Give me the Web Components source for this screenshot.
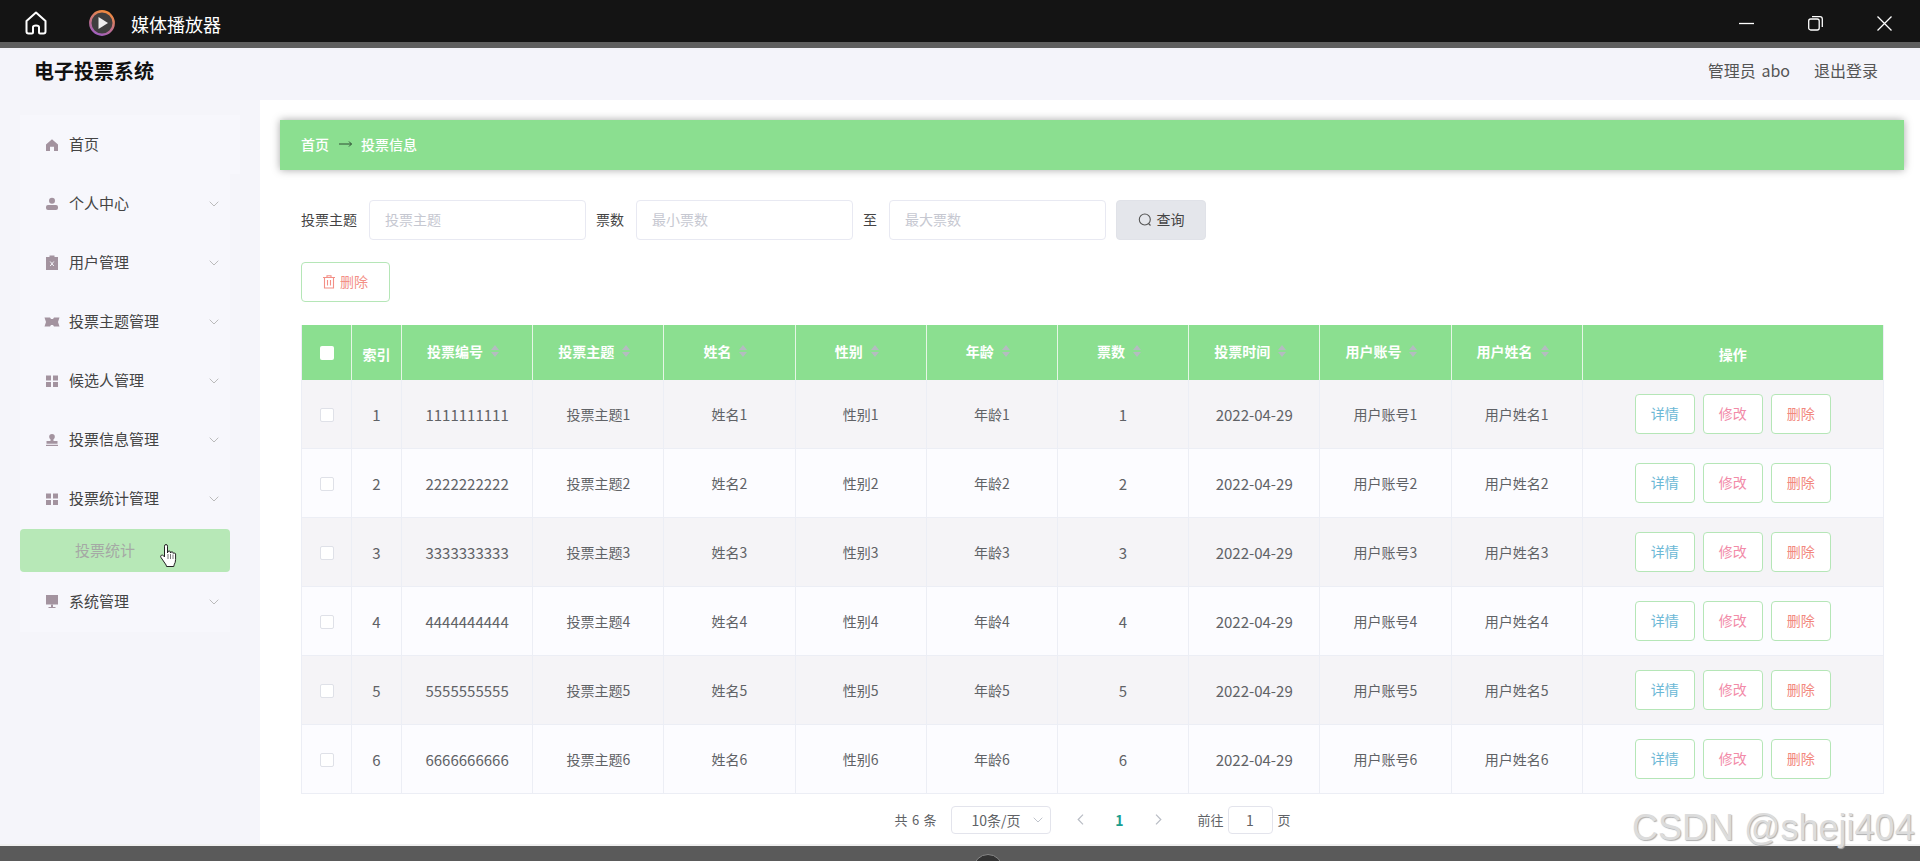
<!DOCTYPE html>
<html lang="zh">
<head>
<meta charset="utf-8">
<title>电子投票系统</title>
<style>
  html, body { margin: 0; height: 861px; overflow: hidden; background: #fff; }
  body { font-family: "Noto Sans CJK SC", "Noto Sans", sans-serif; }
</style>
</head>
<body>
<app-shell>
  <title-bar slot="title">媒体播放器</title-bar>
  <top-nav slot="nav"></top-nav>
  <side-menu slot="side"></side-menu>
  <bread-crumb>投票信息</bread-crumb>
  <search-bar></search-bar>
  <data-table></data-table>
  <page-bar></page-bar>
</app-shell>

<script>
const icons = {
    home: '<path d="M6 .2 12 5.400V12H8V7.800H4V12H0V5.400z"/>',
    user: '<circle cx="6" cy="2.800" r="3"/><rect y="7" width="12" height="5" rx="2"/>',
    clip: '<path d="M3.500-1.500h5V0H12V13H0V0h3.500z"/><path d="m4.200 4.500 3.600 4.500m0-4.500-3.600 4.500" stroke="#f7f7fc" fill="none"/>',
    ticket: '<path d="M-1.500 1.500H4l1 1.500h2l1-1.500h5.500L12 6l1.500 4.500H8L7 9H5l-1 1.500h-5.500L0 6z"/>',
    grid: '<rect y=".5" width="5" height="5"/><rect x="7" y=".5" width="5" height="5"/><rect y="7" width="5" height="5"/><rect x="7" y="7" width="5" height="5"/>',
    stamp: '<circle cx="6" cy="2.800" r="2.800"/><path d="M4.800 4.500h2.400L7.600 7H11.500v2.700H.5V7h3.900z"/><rect y="10.800" width="12" height="1.200"/>',
    screen: '<rect y="-1" width="12" height="9.500"/><rect x="5" y="8.500" width="2" height="2.500"/><rect x="2.500" y="11" width="7" height="1"/>'
};

const chevron = '<svg width="10" height="6" viewBox="0 0 10 6" fill="none" stroke="currentColor"><path d="M.7.7 5 5 9.300.7"/></svg>';

class TitleBar extends HTMLElement {
    constructor() {
        super();
        this.attachShadow({ mode: "open" });
        this.shadowRoot.innerHTML = `
        <style>
            :host { display: block; background: #141414; color: #fff; border-bottom: 6px solid #5f5f5f; }
            .bar { height: 42px; box-sizing: border-box; padding: 4px 0 0 25px; display: flex; align-items: center; font-size: 18px; }
            .app { margin-left: 42px; margin-right: 16px; display: block; }
            .name { margin-top: 1px; }
            .win { margin-left: auto; display: flex; gap: 54px; padding-right: 28px; }
            svg { display: block; }
        </style>
        <div class="bar">
            <svg width="22" height="24" viewBox="0 0 22 24" fill="none" stroke="#fff" stroke-width="2" stroke-linejoin="round"><path d="M11 1.500 1.500 10v10.500q0 2 2 2h3.500q1 0 1-1V16q0-1.500 3-1.500t3 1.500v5.500q0 1 1 1h3.500q2 0 2-2V10z"/></svg>
            <svg class="app" width="26" height="26" viewBox="0 0 26 26">
                <defs><linearGradient id="ring" x1="0.7" y1="0" x2="0.3" y2="1"><stop offset="0" stop-color="#f08a3c"/><stop offset="1" stop-color="#a05fc0"/></linearGradient></defs>
                <circle cx="13" cy="13" r="11.700" fill="#3f3f3f" stroke="url(#ring)" stroke-width="2.400"/>
                <path d="M9.500 7 19 13 9.500 19z" fill="#eee"/>
            </svg>
            <span class="name"><slot></slot></span>
            <div class="win">
                <svg width="15" height="15" viewBox="0 0 15 15" fill="none" stroke="#fff" stroke-width="1.300"><path d="M0 7.500h15"/></svg>
                <svg width="15" height="15" viewBox="0 0 15 15" fill="none" stroke="#fff" stroke-width="1.300"><rect x=".7" y="3" width="10.500" height="11" rx="2"/><path d="M4 .7h8q2.300 0 2.300 2.300v8"/></svg>
                <svg width="15" height="15" viewBox="0 0 15 15" fill="none" stroke="#fff" stroke-width="1.300"><path d="m.5.500 14 14m0-14-14 14"/></svg>
            </div>
        </div>`;
    }
}

class TopNav extends HTMLElement {
    constructor() {
        super();
        this.attachShadow({ mode: "open" });
        this.shadowRoot.innerHTML = `
        <style>
            :host { display: flex; height: 52px; align-items: center; background: #f4f4fa; padding: 0 42px 8px 34px; box-sizing: border-box; }
            b { font-size: 20px; font-weight: 700; color: #111; }
            span { font-size: 16px; color: #555; }
            .user { margin-left: auto; margin-right: 24px; word-spacing: 2px; }
        </style>
        <b>电子投票系统</b>
        <span class="user">管理员 abo</span>
        <span>退出登录</span>`;
    }
}

class MenuItem extends HTMLElement {
    constructor() {
        super();
        this.attachShadow({ mode: "open" });
        const arrow = this.hasAttribute("plain") ? "" : `<span class="arrow">${chevron}</span>`;
        this.shadowRoot.innerHTML = `
        <style>
            :host { display: flex; height: 59px; align-items: center; padding: 0 11px 0 26px; font-size: 15px; color: #444; }
            svg { display: block; }
            .ic { width: 12px; height: 12px; fill: #a3939f; margin-right: 11px; overflow: visible; }
            .txt { margin-top: -2px; }
            .arrow { margin-left: auto; color: #bbb; }
        </style>
        <svg class="ic" viewBox="0 0 12 12">${icons[this.getAttribute("icon")]}</svg>
        <span class="txt"><slot></slot></span>
        ${arrow}`;
    }
}

class SideMenu extends HTMLElement {
    constructor() {
        super();
        this.attachShadow({ mode: "open" });
        this.shadowRoot.innerHTML = `
        <style>
            :host { display: block; width: 260px; background: #f5f5fa; padding-top: 15px; box-sizing: border-box; flex: none; }
            .menu { margin-left: 20px; width: 210px; background: #f7f7fc; position: relative; padding-bottom: 1px; }
            .home { width: 220px; background: #f7f7fc; box-sizing: border-box; }
            .active { height: 43px; margin-top: 1px; background: #b7e8b7; border-radius: 4px; display: flex; align-items: center; padding: 0 0 2px 55px; font-size: 15px; color: #a5a9a5; box-sizing: border-box; }
            .hand { position: absolute; left: 140px; top: 429px; }
        </style>
        <div class="menu">
            <menu-item class="home" icon="home" plain>首页</menu-item>
            <menu-item icon="user">个人中心</menu-item>
            <menu-item icon="clip">用户管理</menu-item>
            <menu-item icon="ticket">投票主题管理</menu-item>
            <menu-item icon="grid">候选人管理</menu-item>
            <menu-item icon="stamp">投票信息管理</menu-item>
            <menu-item icon="grid">投票统计管理</menu-item>
            <div class="active">投票统计</div>
            <menu-item icon="screen">系统管理</menu-item>
            <svg class="hand" width="18" height="23" viewBox="0 0 18 23">
                <path d="M4.500 2.200q0-1.700 1.500-1.700t1.500 1.700V9l.3-1.500q1.500-1 2.500 0l.2 1.500.3-.8q1.400-.8 2.300.2l.2 1 .3-.3q1.500-.5 2 .8v5.500q0 3-1.500 5.500l-.3 1.600H6.500l-.4-1.500L1 13.500q-1-1.500.4-2.300 1.200-.5 2.300.7l.8 1z" fill="#fff" stroke="#222" stroke-width="1" stroke-linejoin="round"/>
                <path d="M8 10v5m2.500-5v5m2.500-4.500V15" stroke="#555" stroke-width=".8"/>
            </svg>
        </div>`;
    }
}

class BreadCrumb extends HTMLElement {
    constructor() {
        super();
        this.attachShadow({ mode: "open" });
        this.shadowRoot.innerHTML = `
        <style>
            :host { display: flex; height: 50px; align-items: center; background: #8bdf90; color: #fff; font-size: 14px; font-weight: 500; padding: 0 0 2px 21px; box-sizing: border-box; box-shadow: 0 0 8px rgba(0,0,0,.35); }
            svg { display: block; margin: 0 9px 0 10px; }
        </style>
        <span>首页</span>
        <svg width="13" height="8" viewBox="0 0 13 8" fill="none" stroke="#2f4f35"><path d="M0 4h12.500M10 1.500 12.500 4 10 6.500"/></svg>
        <slot></slot>`;
    }
}

class UiInput extends HTMLElement {
    constructor() {
        super();
        this.attachShadow({ mode: "open" });
        this.shadowRoot.innerHTML = `
        <style>
            :host { display: flex; width: 217px; height: 40px; align-items: center; box-sizing: border-box; border: 1.500px solid #e8e9f2; border-radius: 4px; padding: 0 0 2px 15px; background: #fff; color: #c6c8d1; font-size: 14px; }
        </style>
        <slot></slot>`;
    }
}

class SearchBar extends HTMLElement {
    constructor() {
        super();
        this.attachShadow({ mode: "open" });
        this.shadowRoot.innerHTML = `
        <style>
            :host { display: block; font-size: 14px; color: #444; padding-top: 30px; }
            .row { display: flex; align-items: center; height: 40px; }
            label { margin: 0 12px 2px 0; }
            ui-input { margin-right: 10px; }
            button { font: inherit; background: #e4e6eb; border: 1px solid #e0e2e8; border-radius: 4px; width: 90px; height: 40px; color: #444; display: flex; align-items: center; justify-content: center; gap: 5px; padding: 0 0 2px; box-sizing: border-box; }
            .del { margin-top: 22px; width: 89px; background: #fff; border: 1.500px solid #b5e6b7; color: #f38f86; }
            svg { display: block; margin-top: 2px; }
        </style>
        <div class="row">
            <label>投票主题</label><ui-input>投票主题</ui-input>
            <label>票数</label><ui-input>最小票数</ui-input>
            <label>至</label><ui-input>最大票数</ui-input>
            <button><svg width="14" height="14" viewBox="0 0 14 14" fill="none" stroke="#555" stroke-width="1.100"><circle cx="6.800" cy="6.500" r="5.500"/><path d="m10.500 10.500 2 2"/></svg>查询</button>
        </div>
        <button class="del"><svg width="12" height="14" viewBox="0 0 12 14" fill="none" stroke="#f38f86" stroke-width="1.100"><path d="M0 2.500h12M4 2.500V.8h4v1.700M1.500 2.500V13h9V2.500M4.500 5v5.500M7.500 5v5.500"/></svg>删除</button>`;
    }
}

const rows = [1, 2, 3, 4, 5, 6].map(n => ({
    no: String(n).repeat(10),
    theme: "投票主题" + n,
    name: "姓名" + n,
    sex: "性别" + n,
    age: "年龄" + n,
    votes: n,
    time: "2022-04-29",
    account: "用户账号" + n,
    user: "用户姓名" + n
}));

class DataTable extends HTMLElement {
    constructor() {
        super();
        this.attachShadow({ mode: "open" });
        const heads = ["投票编号", "投票主题", "姓名", "性别", "年龄", "票数", "投票时间", "用户账号", "用户姓名"];
        const sort = '<svg class="sort" width="8" height="12" viewBox="0 0 8 12" fill="#b4bcc0"><path d="M4 0 8 5H0zM4 12 0 7h8z"/></svg>';
        const head = heads.map(h => `<div class="th"><b>${h}</b><span class="caret">${sort}</span></div>`).join("");
        const body = rows.map((r, i) => `
            <div class="tr ${i % 2 ? "even" : "odd"}">
                <div class="td"><span class="box"></span></div>
                <div class="td num">${i + 1}</div>
                <div class="td num">${r.no}</div>
                <div class="td">${r.theme}</div>
                <div class="td">${r.name}</div>
                <div class="td">${r.sex}</div>
                <div class="td">${r.age}</div>
                <div class="td num">${r.votes}</div>
                <div class="td num">${r.time}</div>
                <div class="td">${r.account}</div>
                <div class="td">${r.user}</div>
                <div class="td ops">
                    <button class="blue">详情</button><button class="pink">修改</button><button class="red">删除</button>
                </div>
            </div>`).join("");
        this.shadowRoot.innerHTML = `
        <style>
            :host { display: block; margin-top: 23px; font-size: 14px; color: #606266; border: solid #eceef5; border-width: 0 1px 1px 1px; }
            .tr { display: grid; grid-template-columns: 50px 50px repeat(9, 131.200px) 1fr; height: 69px; border-bottom: 1px solid #eceef5; box-sizing: border-box; }
            .tr:last-child { border-bottom: 0; height: 68px; }
            .odd { background: #f5f4f7; }
            .even { background: #fcfcff; }
            .head { background: #8bdf90; height: 55px; color: #fff; border-bottom: 0; }
            .th, .td { display: flex; align-items: center; justify-content: center; border-right: 1px solid #eceef5; box-sizing: border-box; }
            .td:last-child, .th:last-child { border-right: 0; }
            .num { font-size: 15px; }
            .th { border-right-color: #e6f6e6; padding-bottom: 3px; }
            .th.flat { padding: 2px 0 0; }
            b { font-weight: 700; }
            .caret { width: 24px; display: flex; justify-content: center; }
            .box { width: 14px; height: 14px; margin-top: 1px; box-sizing: border-box; background: #fff; border: 1px solid #dfe1e8; border-radius: 2px; display: block; }
            .head .box { border: 0; margin-top: -2px; }
            .ops { gap: 8px; }
            button { font: inherit; width: 60px; height: 40px; background: #fff; border: 1.500px solid #b5e6b7; border-radius: 4px; padding: 0 0 2px; }
            .blue { color: #6cb8d6; }
            .pink { color: #f28ba8; }
            .red { color: #f2887e; }
        </style>
        <div class="tr head">
            <div class="th flat"><span class="box"></span></div>
            <div class="th flat"><b>索引</b></div>
            ${head}
            <div class="th flat"><b>操作</b></div>
        </div>
        ${body}`;
    }
}

class PageBar extends HTMLElement {
    constructor() {
        super();
        this.attachShadow({ mode: "open" });
        this.shadowRoot.innerHTML = `
        <style>
            :host { display: flex; height: 51px; align-items: center; justify-content: center; font-size: 13px; color: #606266; box-sizing: border-box; }
            .total { width: 42px; word-spacing: 1.500px; white-space: nowrap; }
            .select { width: 100px; height: 28px; margin-left: 15px; box-sizing: border-box; border: 1px solid #e3e4ec; border-radius: 4px; display: flex; align-items: center; padding-left: 19px; font-size: 14px; }
            .select span { margin-left: auto; margin-right: 7px; color: #c0c4cc; }
            svg { display: block; }
            .prev { margin-left: 25.500px; }
            .num { width: 71px; box-sizing: border-box; text-align: center; color: #1a9e8f; font-weight: 700; font-size: 14px; }
            .go { margin-left: 35.500px; margin-right: 4px; }
            .jump { width: 45px; height: 28px; box-sizing: border-box; border: 1px solid #e3e4ec; border-radius: 4px; margin-right: 5px; display: flex; align-items: center; justify-content: center; font-size: 14px; }
        </style>
        <span class="total">共 6 条</span>
        <div class="select">10条/页<span>${chevron}</span></div>
        <svg class="prev" width="7" height="11" viewBox="0 0 7 11" fill="none" stroke="#b8bcc4" stroke-width="1.200"><path d="M6 .7 1.200 5.500 6 10.300"/></svg>
        <span class="num">1</span>
        <svg width="7" height="11" viewBox="0 0 7 11" fill="none" stroke="#b8bcc4" stroke-width="1.200"><path d="M1 .7 5.800 5.500 1 10.300"/></svg>
        <span class="go">前往</span>
        <div class="jump">1</div>
        <span>页</span>`;
    }
}

class AppShell extends HTMLElement {
    constructor() {
        super();
        this.attachShadow({ mode: "open" });
        this.shadowRoot.innerHTML = `
        <style>
            :host { display: flex; flex-direction: column; height: 861px; position: relative; overflow: hidden; }
            .body { flex: 1; display: flex; min-height: 0; }
            main { flex: 1; min-width: 0; padding: 20px 16px 0 20px; }
            .inner { padding: 0 20px 0 21px; }
            .foot { height: 15px; flex: none; background: #5a5a5a; border-top: 2px solid #f0f0f0; position: relative; overflow: hidden; }
            .foot i { position: absolute; left: 973px; top: 8px; width: 28px; height: 28px; border-radius: 50%; background: #333; border: 1px solid #888; }
            .mark { position: absolute; left: 1632px; top: 807px; font: 36px/42px "Liberation Sans", sans-serif; color: #dcdcdc; text-shadow: 1px 1px 1px #b0b0b0; white-space: nowrap; }
        </style>
        <slot name="title"></slot>
        <slot name="nav"></slot>
        <div class="body">
            <slot name="side"></slot>
            <main>
                <slot name="crumb"></slot>
                <div class="inner"><slot></slot></div>
            </main>
        </div>
        <div class="foot"><i></i></div>
        <div class="mark">CSDN @sheji404</div>`;
    }
    connectedCallback() {
        const crumb = this.querySelector("bread-crumb");
        if (crumb) crumb.slot = "crumb";
    }
}

customElements.define("title-bar", TitleBar);
customElements.define("top-nav", TopNav);
customElements.define("menu-item", MenuItem);
customElements.define("side-menu", SideMenu);
customElements.define("bread-crumb", BreadCrumb);
customElements.define("ui-input", UiInput);
customElements.define("search-bar", SearchBar);
customElements.define("data-table", DataTable);
customElements.define("page-bar", PageBar);
customElements.define("app-shell", AppShell);
</script>
</body>
</html>
